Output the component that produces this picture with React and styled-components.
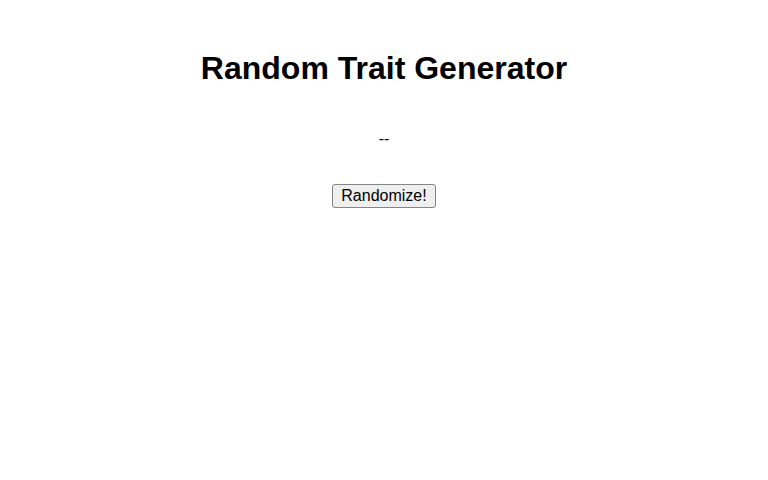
import React, { useState } from "react";
import styled, { createGlobalStyle } from "styled-components";

const GlobalStyle = createGlobalStyle`
  body {
    margin: 0;
    background: #fff;
    font-family: "Liberation Sans", Arial, sans-serif;
    color: #000;
  }
`;

const Page = styled.div`
  display: flex;
  flex-direction: column;
  align-items: center;
  padding-top: 50px;
  text-align: center;
`;

const Title = styled.h1`
  margin: 0;
  font-size: 32px;
  font-weight: bold;
  line-height: 37px;
`;

const Trait = styled.p`
  margin: 43px 0 0;
  font-size: 16px;
  line-height: 18px;
`;

const Button = styled.button`
  margin-top: 36px;
  padding: 1px 8px;
  height: 24px;
  font-family: "Liberation Sans", Arial, sans-serif;
  font-size: 16px;
  color: #000;
  background: #efefef;
  border: 1px solid #858585;
  border-radius: 3px;
  cursor: pointer;
  &:hover {
    background: #e5e5e5;
  }
`;

const traits = ["Brave", "Curious", "Loyal", "Clever", "Stubborn", "Kind", "Witty", "Shy"];

function App() {
  const [trait, setTrait] = useState("--");

  const handleRandomize = () => {
    setTrait(traits[Math.floor(Math.random() * traits.length)]);
  };

  return (
    <Page>
      <GlobalStyle />
      <Title>Random Trait Generator</Title>
      <Trait>{trait}</Trait>
      <Button onClick={handleRandomize}>Randomize!</Button>
    </Page>
  );
}

export default App;
